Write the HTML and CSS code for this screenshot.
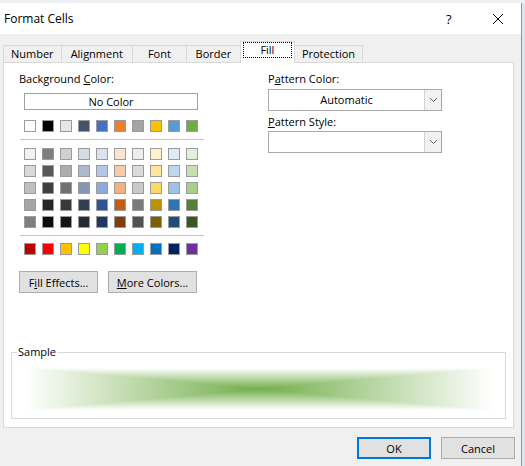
FILE: index.html
```html
<!DOCTYPE html>
<html lang="en">
<head>
    <meta charset="UTF-8">
    <title>Format Cells</title>
    <link rel="stylesheet" href="styles.css">
</head>
<body>

    <div class="screen-top"></div>

    <div class="dialog">
        <div class="titlebar">
            <span class="title">Format Cells</span>
            <span class="help">?</span>
            <span class="close">
                <svg width="12" height="12" viewBox="0 0 12 12"><path d="M1 1 L11 11 M11 1 L1 11" stroke="#000" stroke-width="1" fill="none"/></svg>
            </span>
        </div>

        <div class="tabs">
            <div class="tab">Number</div>
            <div class="tab">Alignment</div>
            <div class="tab">Font</div>
            <div class="tab">Border</div>
            <div class="tab active"><span class="focus">Fill</span></div>
            <div class="tab">Protection</div>
        </div>

        <div class="panel">
            <div class="columns">
                <div class="bg-col">
                    <div class="label">Background <u>C</u>olor:</div>
                    <div class="no-color">No Color</div>
                    <div class="swatches" id="row-main"></div>
                    <div class="sep"></div>
                    <div class="swatches theme" id="row-theme"></div>
                    <div class="sep"></div>
                    <div class="swatches" id="row-standard"></div>
                    <div class="btn-row">
                        <button class="btn fill-effects">F<u>i</u>ll Effects...</button>
                        <button class="btn more-colors"><u>M</u>ore Colors...</button>
                    </div>
                </div>

                <div class="pattern-col">
                    <div class="label">P<u>a</u>ttern Color:</div>
                    <div class="combo">
                        <span class="combo-text">Automatic</span>
                        <span class="combo-arrow"><svg width="9" height="6" viewBox="0 0 9 6"><path d="M1 1 L4.5 4.5 L8 1" stroke="#606060" stroke-width="1" fill="none"/></svg></span>
                    </div>
                    <div class="label second"><u>P</u>attern Style:</div>
                    <div class="combo">
                        <span class="combo-text"></span>
                        <span class="combo-arrow"><svg width="9" height="6" viewBox="0 0 9 6"><path d="M1 1 L4.5 4.5 L8 1" stroke="#606060" stroke-width="1" fill="none"/></svg></span>
                    </div>
                </div>
            </div>

            <fieldset class="sample">
                <legend>Sample</legend>
                <div class="sample-fill">
                    <svg width="100%" height="100%" viewBox="0 0 467 42" preserveAspectRatio="none">
                        <defs>
                            <linearGradient id="g-horiz" gradientUnits="userSpaceOnUse" x1="0" y1="0" x2="467" y2="0">
                                <stop offset="0" stop-color="#ffffff"/>
                                <stop offset="0.5" stop-color="#72ae4a"/>
                                <stop offset="1" stop-color="#ffffff"/>
                            </linearGradient>
                            <linearGradient id="g-vert" gradientUnits="userSpaceOnUse" x1="0" y1="0" x2="0" y2="42">
                                <stop offset="0" stop-color="#ffffff"/>
                                <stop offset="0.5" stop-color="#72ae4a"/>
                                <stop offset="1" stop-color="#ffffff"/>
                            </linearGradient>
                        </defs>
                        <rect x="0" y="0" width="467" height="42" fill="url(#g-horiz)"/>
                        <polygon points="0,0 467,0 233.5,21" fill="url(#g-vert)"/>
                        <polygon points="0,42 467,42 233.5,21" fill="url(#g-vert)"/>
                    </svg>
                </div>
            </fieldset>
        </div>

        <div class="footer">
            <button class="btn dlg-btn ok">OK</button>
            <button class="btn dlg-btn">Cancel</button>
        </div>
    </div>

    <script>
        // Office theme colors
        const mainRow = ['#ffffff', '#000000', '#e7e6e6', '#44546a', '#4472c4', '#ed7d31', '#a5a5a5', '#ffc000', '#5b9bd5', '#70ad47'];
        const themeRows = [
            ['#f2f2f2', '#7f7f7f', '#d0cece', '#d6dce4', '#d9e2f3', '#fbe5d5', '#ededed', '#fff2cc', '#deebf6', '#e2efd9'],
            ['#d8d8d8', '#595959', '#aeabab', '#adb9ca', '#b4c6e7', '#f7cbac', '#dbdbdb', '#fee599', '#bdd7ee', '#c5e0b3'],
            ['#bfbfbf', '#3f3f3f', '#757070', '#8496b0', '#8eaadb', '#f4b183', '#c9c9c9', '#ffd965', '#9cc3e5', '#a8d08d'],
            ['#a5a5a5', '#262626', '#3a3838', '#323f4f', '#2f5496', '#c55a11', '#7b7b7b', '#bf9000', '#2e75b5', '#538135'],
            ['#7f7f7f', '#0c0c0c', '#171616', '#222a35', '#1f3864', '#833c0b', '#525252', '#7f6000', '#1e4e79', '#375623']
        ];
        const standardRow = ['#c00000', '#ff0000', '#ffc000', '#ffff00', '#92d050', '#00b050', '#00b0f0', '#0070c0', '#002060', '#7030a0'];

        function fill(id, colors) {
            const box = document.getElementById(id);
            colors.forEach(c => {
                const s = document.createElement('span');
                s.className = 'swatch';
                s.style.background = c;
                box.appendChild(s);
            });
        }

        fill('row-main', mainRow);
        themeRows.forEach(row => fill('row-theme', row));
        fill('row-standard', standardRow);
    </script>

</body>
</html>
```

FILE: styles.css
```css
body {
    margin: 0;
    padding: 0;
    background-color: #dfe5ec;
    font-family: "Open Sans", "Noto Sans", sans-serif;
    font-size: 11px;
    color: #000;
}
.screen-top {
    height: 3px;
    background-color: #eef0f2;
}
.dialog {
    width: 521px;
    height: 463px;
    background-color: #f0f0f0;
    border-right: 1px solid #7a9cc4;
}
.titlebar {
    height: 31px;
    background-color: #fff;
    display: flex;
    align-items: center;
    font-size: 12px;
}
.titlebar .title {
    margin-left: 4px;
    flex: 1;
}
.titlebar .help {
    width: 10px;
    margin-right: 36px;
    font-size: 13px;
}
.titlebar .close {
    width: 12px;
    height: 12px;
    margin-right: 17px;
    display: flex;
}

/* Tabs */
.tabs {
    display: flex;
    align-items: flex-end;
    padding-top: 7px;
    margin-left: 3px;
}
.tab {
    box-sizing: border-box;
    min-width: 55px;
    height: 17px;
    padding: 0 7px;
    line-height: 16px;
    text-align: center;
    border: 1px solid #d9d9d9;
    border-bottom: none;
    margin-right: -1px;
}
.tab:nth-child(2) {
    padding: 0 9px;
}
.tab.active {
    height: 22px;
    padding: 0 1px;
    background-color: #fff;
    margin-bottom: -1px;
    position: relative;
    z-index: 1;
}
.tab.active .focus {
    display: block;
    margin: 0 1px;
    line-height: 14px;
    border: 1px dotted #000;
}

/* Panel */
.panel {
    box-sizing: border-box;
    height: 366px;
    width: 511px;
    margin-left: 3px;
    background-color: #fff;
    border: 1px solid #d9d9d9;
    display: flex;
    flex-direction: column;
}
.columns {
    display: flex;
    padding-left: 15px;
    padding-top: 8px;
}
.bg-col {
    width: 249px;
}
.label {
    line-height: 16px;
}
.no-color {
    box-sizing: border-box;
    width: 174px;
    height: 17px;
    margin: 6px 0 0 5px;
    border: 1px solid #a0a0a0;
    line-height: 15px;
    text-align: center;
}
.swatches {
    display: grid;
    grid-template-columns: repeat(10, 12px);
    column-gap: 6px;
    row-gap: 5px;
    margin-left: 5px;
}
#row-main {
    margin-top: 10px;
}
.swatch {
    box-sizing: border-box;
    width: 12px;
    height: 12px;
    border: 1px solid #9b9b9b;
}
.sep {
    width: 184px;
    height: 1px;
    margin: 7px 0 8px 1px;
    background-color: #c8c8c8;
}
.theme + .sep {
    margin-bottom: 7px;
}
.btn-row {
    display: flex;
    gap: 10px;
    margin-top: 16px;
}
.btn {
    box-sizing: border-box;
    height: 22px;
    padding: 0;
    font-family: inherit;
    font-size: 11px;
    color: #000;
    background-color: #e1e1e1;
    border: 1px solid #adadad;
}
.fill-effects {
    width: 79px;
}
.more-colors {
    width: 89px;
}

/* Pattern */
.combo {
    box-sizing: border-box;
    width: 174px;
    height: 22px;
    margin-top: 2px;
    border: 1px solid #a8a8a8;
    display: flex;
}
.combo-text {
    flex: 1;
    text-align: center;
    line-height: 20px;
}
.combo-arrow {
    width: 16px;
    border-left: 1px solid #d4d4d4;
    background-color: #f2f2f2;
    display: flex;
    align-items: center;
    justify-content: center;
}
.label.second {
    margin-top: 3px;
}
.pattern-col .combo + .label + .combo {
    margin-top: 1px;
}

/* Sample */
.sample {
    margin: auto 7px 8px 7px;
    padding: 0;
    border: 1px solid #d9d9d9;
    min-width: 0;
}
.sample legend {
    margin-left: 5px;
    padding: 0 1px;
    line-height: 14px;
}
.sample-fill {
    height: 42px;
    margin: 9px 12px 8px 13px;
}
.sample-fill svg {
    display: block;
}

/* Footer */
.footer {
    display: flex;
    justify-content: flex-end;
    gap: 10px;
    margin-top: 9px;
    margin-right: 6px;
}
.dlg-btn {
    width: 74px;
}
.dlg-btn.ok {
    border-color: #0078d7;
    box-shadow: inset 0 0 0 1px #0078d7;
}
```
